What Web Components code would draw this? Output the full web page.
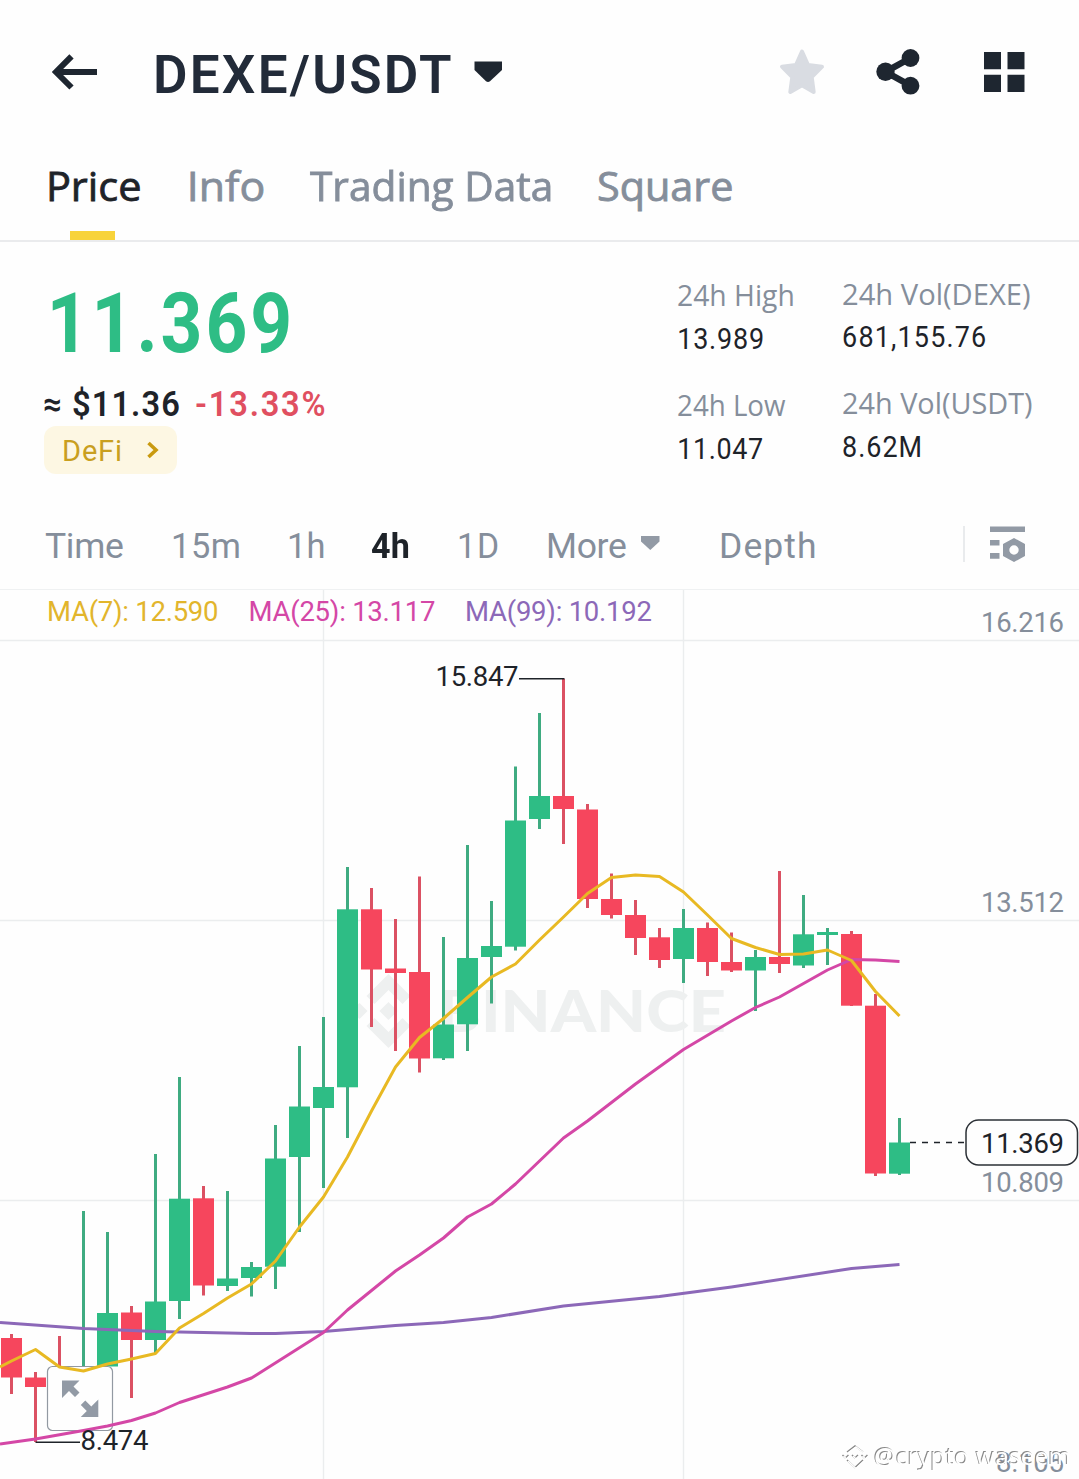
<!DOCTYPE html>
<html lang="en">
<head>
<meta charset="utf-8">
<title>DEXE/USDT</title>
<style>
html,body{margin:0;background:#fefefe}
body{width:1079px;height:1479px;overflow:hidden;font-family:Roboto,"Liberation Sans",sans-serif}
</style>
</head>
<body>
<market-app></market-app>
<script>
const ctx=document.createElement('canvas').getContext('2d');
const define=(name,html,setup)=>customElements.define(name,class extends HTMLElement{
  connectedCallback(){
    if(this.shadowRoot)return;
    this.attachShadow({mode:'open'}).innerHTML=html;
    if(setup)setup.call(this,this.shadowRoot);
  }
});

/* Single-line label: w is the drawn width, k an optional glyph condensing factor. */
define('fit-text',`<style>:host{display:block;flex:none;white-space:pre}span{display:inline-block;transform-origin:0 50%}</style><span><slot></slot></span>`,function(root){
  const w=+this.getAttribute('w'),t=this.textContent,s=root.querySelector('span'),c=getComputedStyle(this);
  this.style.width=w+'px';
  ctx.font=`${c.fontWeight} ${c.fontSize} ${c.fontFamily}`;
  const m=ctx.measureText(t),left=m.actualBoundingBoxLeft,ink=left+m.actualBoundingBoxRight;
  const k=this.hasAttribute('stretch')?w/ink:+(this.getAttribute('k')||1);
  s.style.letterSpacing=(w/k-ink)/(t.length-1)+'px';
  s.style.transform=`translateX(${left*k}px) scaleX(${k})`;
});

define('pair-header',`<style>
:host{display:flex;height:145px;align-items:center;padding:0 54px 0 51px;box-sizing:border-box;color:#1e2630}
svg{display:block;flex:none;margin-top:-1px}
fit-text{font-size:53px;font-weight:600;line-height:60px;margin:4px 23px 0 59px;color:#222b39}
.actions{display:flex;align-items:center;margin-left:auto}
</style>
<svg width="46" height="40" viewBox="51 52 46 40"><path d="M97 72H56M71.500 56.300L56 72l15.500 15.500" fill="none" stroke="currentColor" stroke-width="6"/></svg>
<fit-text w="295">DEXE/USDT</fit-text>
<svg width="28" height="22" viewBox="474 62 28 22"><path d="M474.500 62.500h27.500v8.500L490 82.300q-2 1.500-4 0L474.500 71z" fill="currentColor"/></svg>
<div class="actions">
<svg width="46" height="48" viewBox="779 49 46 48" style="margin-right:51px"><path d="M802 52.500l6 13.500 14 1.700-10.300 10.300 2 15L802 86.200l-11.700 6.800 2-15L782 67.700 796 66z" fill="#d9dce2" stroke="#d9dce2" stroke-width="4" stroke-linejoin="round"/></svg>
<svg width="44" height="48" viewBox="876 48 44 48" style="margin-right:64px"><path d="M910.500 58L885.500 71.800l25 13.900" fill="none" stroke="currentColor" stroke-width="6.500"/><g fill="currentColor"><circle cx="885.500" cy="71.800" r="9.200"/><circle cx="910.500" cy="58" r="8.900"/><circle cx="910.500" cy="85.700" r="8.900"/></g></svg>
<svg width="41" height="42" viewBox="984.500 51 41 42"><path d="M984.500 52h17v17.300h-17zM1008 52h17v17.300h-17zM984.500 74.700h17V92h-17zM1008 74.700h17V92h-17z" fill="currentColor"/></svg>
</div>`);

define('tab-item',`<style>:host{display:flex;flex-direction:column;align-items:center;gap:5px;color:#858e9b}
:host([active]){color:#1e2329}i{display:none;width:45px;height:9px;background:#f8d33a;margin-left:-4px}:host([active]) i{display:block}</style><slot></slot><i></i>`);
define('tab-strip',`<style>:host{display:flex;height:97px;box-sizing:border-box;border-bottom:2px solid #eaebed;padding-left:49px;gap:48px;font:500 40px/82px "Open Sans",sans-serif;-webkit-text-stroke:.8px currentColor}tab-item{height:95px}</style>
<tab-item active style="gap:4px"><fit-text w="91" stretch>Price</fit-text></tab-item>
<tab-item style="margin:0 -1px 0 2px"><fit-text w="73" stretch>Info</fit-text></tab-item>
<tab-item><fit-text w="240" stretch>Trading Data</fit-text></tab-item>
<tab-item style="margin-left:1px"><fit-text w="133" stretch>Square</fit-text></tab-item>`);

customElements.define('stat-item',class extends HTMLElement{
  connectedCallback(){
    if(this.shadowRoot)return;
    const a=n=>this.getAttribute(n);
    this.attachShadow({mode:'open'}).innerHTML=`<style>:host{display:flex;flex-direction:column;font-size:29px;line-height:36px;color:#1e2329;gap:var(--gap,8px)}
.l{color:#858e9b;font-family:"Open Sans",sans-serif}.v{margin-left:var(--shift,1px)}</style><fit-text class="l" w="${a('lw')}" stretch>${a('label')}</fit-text><fit-text class="v" w="${a('vw')}" k=".93">${a('value')}</fit-text>`;
  }
});
define('ticker-summary',`<style>
:host{display:flex;height:258px;box-sizing:border-box;color:#1e2329}
.left{width:634px;padding:37px 0 0 44px;box-sizing:border-box}
.price{font-size:83px;font-weight:700;line-height:90px;color:#2ebd85;margin-left:8px}
.sub{display:flex;gap:17px;margin-top:15px;font-size:34.700px;font-weight:600;line-height:40px}
.down{color:#e04f60}
.pill{display:flex;align-items:center;width:133px;height:48px;margin-top:2px;border-radius:12px;background:#fdf7e3;color:#c99f1f;box-sizing:border-box;padding-left:20px;font-size:29px;line-height:48px}
.pill fit-text{margin-top:1px}
.col{display:flex;flex-direction:column;gap:30px;padding-top:34.500px;width:165px;flex:none;margin-left:44px}
.col+.col{width:190px;margin-left:0;padding-top:33.500px;--shift:0}
svg{margin-left:26px}
</style>
<div class="left"><fit-text class="price" w="237" k=".88">11.369</fit-text>
<div class="sub"><fit-text w="135" k=".94">≈ $11.36</fit-text><fit-text class="down" w="129" k=".94">-13.33%</fit-text></div>
<div class="pill"><fit-text w="57">DeFi</fit-text><svg width="12" height="18" viewBox="147 441 12 18"><path d="M148.500 443l7.500 7-7.500 7" fill="none" stroke="#c99a10" stroke-width="3.600"/></svg></div></div>
<div class="col"><stat-item label="24h High" lw="115" value="13.989" vw="84"></stat-item><stat-item label="24h Low" lw="108" value="11.047" vw="84"></stat-item></div>
<div class="col"><stat-item style="--gap:7px" label="24h Vol(DEXE)" lw="187" value="681,155.76" vw="142"></stat-item><stat-item label="24h Vol(USDT)" lw="189" value="8.62M" vw="77"></stat-item></div>`);

define('interval-bar',`<style>
:host{display:flex;height:90px;box-sizing:border-box;border-bottom:1.500px solid #eff1f2;padding:3px 53px 0 45px;align-items:center;font-size:35.500px;line-height:50px;color:#858e9b}
b{display:block;font-weight:700;color:#1e2329}
svg{display:block;flex:none}
.rule{width:2px;height:36px;background:#e9ebed;margin:-5px 25px 0 auto}
</style>
<fit-text w="78">Time</fit-text><fit-text w="66" k=".97" style="margin-left:50px">15m</fit-text><fit-text w="35" k=".97" style="margin-left:50px">1h</fit-text>
<b style="margin-left:47px"><fit-text w="38" k=".96">4h</fit-text></b><fit-text w="39" k=".95" style="margin-left:50px">1D</fit-text><fit-text w="78" style="margin-left:50px">More</fit-text>
<svg width="19" height="14" viewBox="642 536 19 14" style="margin:-6px 0 0 15px"><path d="M642 536h18.500v5.500l-9.200 8.500-9.300-8.500z" fill="#929aa5"/></svg>
<fit-text w="94" style="margin-left:61px">Depth</fit-text>
<div class="rule"></div>
<svg width="36" height="36" viewBox="990 526 36 36" style="margin-top:-4px"><path d="M990 526.500h35v5.500h-35zM990 540h9.500v5.500H990zM990 553h9.500v5.700H990zM1014 538l11 6v12l-11 6-11-6v-12zm0 7.300a4.700 4.700 0 1 0 0 9.400 4.700 4.700 0 1 0 0-9.400z" fill="#929aa5" fill-rule="evenodd"/></svg>`);

/* One row per candle: direction, body top, body bottom, wick top, wick bottom. */
const candles=[['r',1338,1377.500,1334,1394],['r',1377.500,1387,1372,1442],['r',1372,1390,1336,1392],['g',1368,1390,1211,1392],['g',1313,1366.500,1232,1366],['r',1312.500,1340,1306,1398],['g',1301.500,1340,1154,1354],['g',1198.700,1301,1077,1319],['r',1198.300,1285.500,1186,1295.500],['g',1278.500,1286,1191,1291],['g',1267,1278,1262,1296.500],['g',1158.500,1266.700,1125,1289],['g',1106.500,1157,1046,1232],['g',1087,1108,1017,1188],['g',909.300,1087.300,867,1138],['r',909.300,969.500,888,1027],['r',968.500,973,919,1051],['r',972,1058.500,876.500,1072.500],['g',1024.500,1058.300,937,1060],['g',958,1024.300,845,1051],['g',946,957,901,1003.500],['g',820.500,946.700,766.500,950.500],['g',796,819,713,829],['r',796,809,679,844],['r',809.500,899,804,908],['r',899,915,873.500,918.500],['r',915,938,900,955],['r',937.300,960,928,968],['g',928,959,909,983],['r',928,962,922.500,976],['r',962,970.500,932.500,972],['g',957,970.500,950,1011],['r',957,964,871,973],['g',934.300,965.500,895,968],['g',932,935,928,965],['r',934,1005.700,931,1006],['r',1005.700,1173.500,994,1176],['g',1142.500,1173.700,1118,1175]];
const ma7='0,1367 11.5,1361 35.5,1349.5 59.5,1367 83.5,1371 107.5,1364 131.5,1359 155.5,1353.5 179.5,1328 203.5,1313.5 227.5,1298 251.5,1284 275.5,1261 299.5,1227 323.5,1197 347.5,1157 371.5,1111 395.5,1067 419.5,1037.5 443.5,1018.5 467.5,997.5 491.5,977 515.5,964 539.5,940 563.5,917 587.5,893.5 611.5,877.5 635.5,875 659.5,876.5 683.5,892 707.5,915 731.5,938.5 755.5,947.5 779.5,954.5 803.5,954 827.5,950 851.5,960.5 875.5,991.5 899.5,1016';
const ma25='0,1444 35.5,1439 83.5,1430.5 107.5,1426 131.5,1420.5 155.5,1413 179.5,1402.5 227.5,1387 251.5,1378 323.5,1332.5 347.5,1310 395.5,1271 419.5,1255 443.5,1238 467.5,1217 491.5,1204 515.5,1184 563.5,1138 587.5,1121 635.5,1084 683.5,1049.5 731.5,1021 755.5,1007.5 779.5,997 827.5,970 851.5,959.5 875.5,960 899.5,961.5';
const ma99='0,1322.5 83.5,1328.5 155.5,1331.5 251.5,1333.5 275.5,1333.5 323.5,1331.5 395.5,1325.5 443.5,1322.5 491.5,1317.5 563.5,1306 659.5,1296.5 731.5,1287 851.5,1268.5 899.5,1264.5';
const wick={g:'#3fab81',r:'#db5163'},fill={g:'#2ebd85',r:'#f6465d'};
const bars=candles.map(([k,t,b,h,l],i)=>{const x=11.5+24*i;return `<path d="M${x} ${h}V${l}" stroke="${wick[k]}" stroke-width="3"/><rect x="${x-10.5}" y="${t}" width="21" height="${b-t}" fill="${fill[k]}"/>`}).join('');
const logo='M0-37L22-15 14-7 0-21-14-7-22-15zM-29-8l8 8-8 8-8-8zM29-8l8 8-8 8-8-8zM0-9L9 0 0 9-9 0zM0 37L-22 15-14 7 0 21 14 7 22 15z';
define('price-chart',`<style>:host{display:block}svg{display:block;font-family:Roboto,sans-serif;font-size:27.500px}</style>
<svg width="1079" height="889" viewBox="0 590 1079 889">
<path d="M0 640.500H1079M0 920.500H1079M0 1200.500H1079M323.500 590V1479M683.500 590V1479" stroke="#ebedee" stroke-width="1.400"/>
<g fill="#eef0f0"><path d="${logo}" transform="translate(388.500 1011)"/><text x="438" y="1031.500" font-family="Lato" font-weight="900" font-size="57" textLength="288" lengthAdjust="spacingAndGlyphs">BINANCE</text></g>
${bars}
<rect x="47.500" y="1366.500" width="65" height="64" rx="5" fill="#fefefe" stroke="#9299a2" stroke-width="1.200"/>
<path d="M62 1380.500h17.500l-6 6 6 6-4.500 4.500-6-6-7 7zM98.300 1417h-17.500l6-6-6-6 4.500-4.500 6 6 7-7z" fill="#929aa5"/>
<g fill="none" stroke-width="3" stroke-linejoin="round"><polyline points="${ma99}" stroke="#8c68b8"/><polyline points="${ma25}" stroke="#d447a6"/><polyline points="${ma7}" stroke="#e8b923"/></g>
<g fill="none" stroke="#1e2329" stroke-width="1.500"><path d="M519 678.700H564.500M35.500 1442.300H80"/><path d="M910 1142.500H965" stroke-dasharray="6 6"/></g>
<rect x="966" y="1120" width="111.500" height="45" rx="12.500" fill="#fefefe" stroke="#2b3036" stroke-width="1.500"/>
<text x="47" y="620.500" fill="#e2b52c" textLength="171.500">MA(7): 12.590</text>
<text x="248.500" y="620.500" fill="#d447a6" textLength="187">MA(25): 13.117</text>
<text x="465" y="620.500" fill="#8c68b8" textLength="187">MA(99): 10.192</text>
<g fill="#858e9b"><text x="981" y="631.700" textLength="83">16.216</text><text x="981" y="912" textLength="83">13.512</text><text x="981" y="1191.700" textLength="83">10.809</text><text x="996" y="1472" textLength="68">8.105</text></g>
<g fill="#1e2329"><text x="435.500" y="685.700" textLength="83">15.847</text><text x="80.500" y="1449.700" textLength="68">8.474</text><text x="981" y="1152.700" textLength="83">11.369</text></g>
<g style="filter:drop-shadow(-.3px -.3px .6px #888)" fill="#fff"><text x="874" y="1465" font-family="Noto Sans" font-size="24" textLength="197">@crypto waseem</text>
<path d="M848 1453l8-6 8 6M843.500 1456l3 3 3-3M853 1456l3 3 3-3M862.500 1456l3 3 3-3M848 1461l8 7.500 8-7.500" fill="none" stroke="#fff" stroke-width="1.500"/></g>
</svg>`);

define('market-app',`<style>:host{display:flex;flex-direction:column;width:1079px;height:1479px}</style>
<pair-header></pair-header><tab-strip></tab-strip><ticker-summary></ticker-summary><interval-bar></interval-bar><price-chart></price-chart>`);
</script>
</body>
</html>
